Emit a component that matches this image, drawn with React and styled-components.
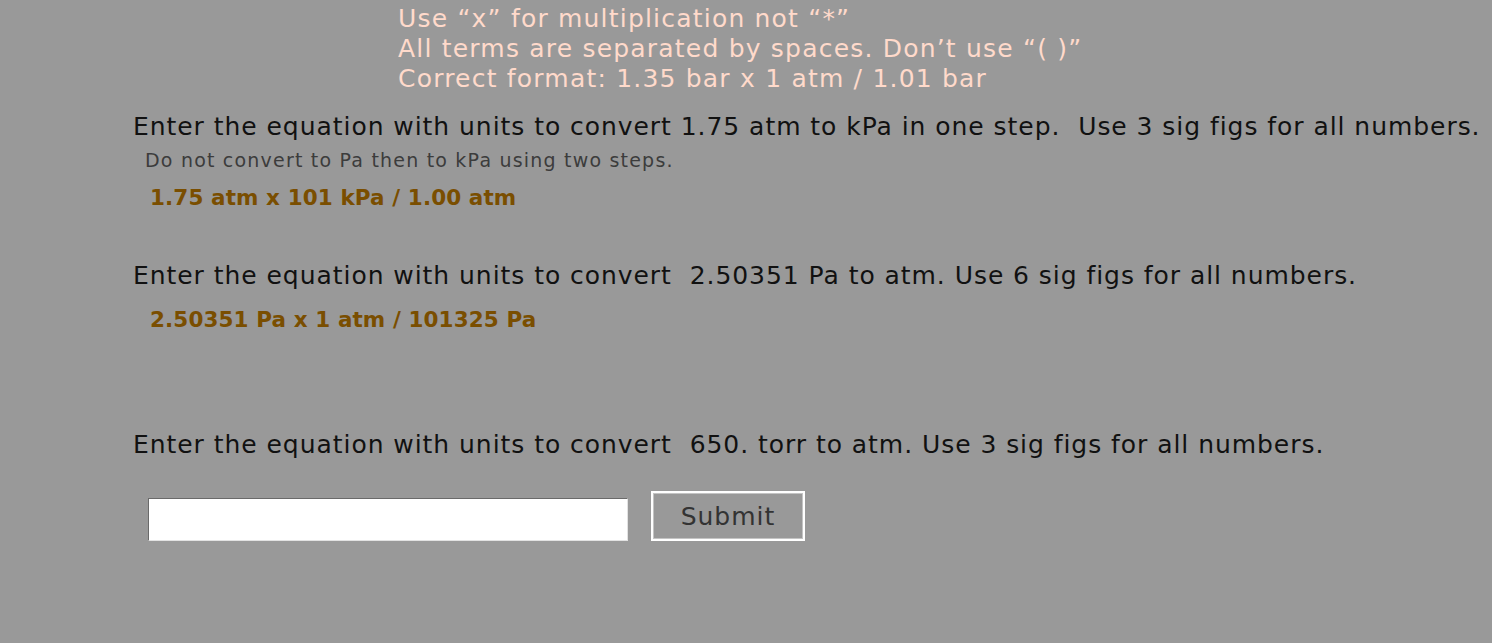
import styled, { createGlobalStyle } from "styled-components";

const GlobalStyle = createGlobalStyle`
  html, body {
    margin: 0;
    background: #999999;
  }
  body {
    font-family: "DejaVu Sans", "Open Sans", sans-serif;
  }
`;

const Page = styled.div`
  width: 1492px;
  height: 643px;
  background: #999999;
  padding-top: 4px;
  box-sizing: border-box;
`;

const Hints = styled.div`
  margin-left: 398px;
  color: #ffdacb;
  font-size: 25px;
  letter-spacing: 1.2px;
  line-height: 30px;
`;

const Question = styled.div`
  margin-left: 133px;
  margin-top: ${(p) => p.$top}px;
  color: #111111;
  font-size: 25px;
  letter-spacing: 0.95px;
  line-height: 30px;
  white-space: pre;
`;

const Note = styled.div`
  margin-left: 145px;
  margin-top: 6px;
  color: #3c3c3c;
  font-size: 19px;
  letter-spacing: 1.2px;
  line-height: 24px;
`;

const Answer = styled.div`
  margin-left: 150px;
  margin-top: ${(p) => p.$top}px;
  color: #7a4e00;
  font-size: 21.5px;
  font-weight: bold;
  letter-spacing: 0.1px;
  line-height: 30px;
`;

const Form = styled.form`
  display: flex;
  align-items: flex-end;
  gap: 23px;
  margin-left: 148px;
  margin-top: 31px;
`;

const Input = styled.input`
  width: 480px;
  height: 43px;
  box-sizing: border-box;
  border: 1px solid #e2e2e2;
  border-top-color: #6a6a6a;
  border-left-color: #6a6a6a;
  background: #ffffff;
  outline: none;
`;

const Button = styled.button`
  width: 154px;
  height: 50px;
  box-sizing: border-box;
  border: 2px solid #ffffff;
  box-shadow: inset 0 0 0 1px #c4c4c4;
  background: #999999;
  color: #333333;
  font-family: inherit;
  font-size: 25px;
  letter-spacing: 1px;
`;

export default function App() {
  return (
    <Page>
      <GlobalStyle />
      <Hints>
        <div>Use “x” for multiplication not “*”</div>
        <div>All terms are separated by spaces. Don’t use “( )”</div>
        <div>Correct format: 1.35 bar x 1 atm / 1.01 bar</div>
      </Hints>
      <Question $top={18}>
        Enter the equation with units to convert 1.75 atm to kPa in one step.  Use 3 sig figs for all numbers.
      </Question>
      <Note>Do not convert to Pa then to kPa using two steps.</Note>
      <Answer $top={11}>1.75 atm x 101 kPa / 1.00 atm</Answer>
      <Question $top={48}>
        Enter the equation with units to convert  2.50351 Pa to atm. Use 6 sig figs for all numbers.
      </Question>
      <Answer $top={14}>2.50351 Pa x 1 atm / 101325 Pa</Answer>
      <Question $top={95}>
        Enter the equation with units to convert  650. torr to atm. Use 3 sig figs for all numbers.
      </Question>
      <Form onSubmit={(e) => e.preventDefault()}>
        <Input type="text" />
        <Button type="submit">Submit</Button>
      </Form>
    </Page>
  );
}
